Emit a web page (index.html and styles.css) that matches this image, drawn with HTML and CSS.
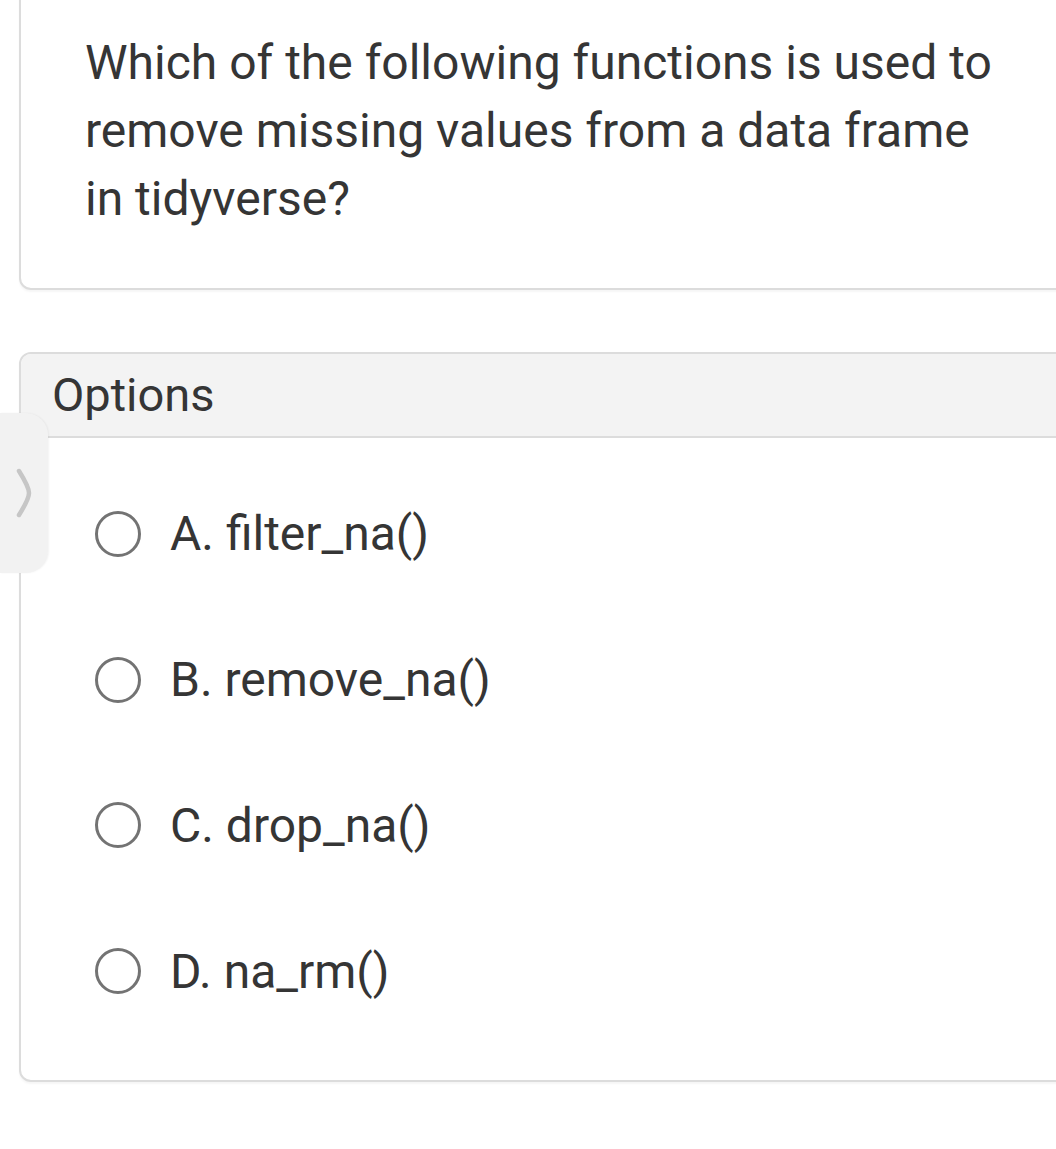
FILE: index.html
```html
<!DOCTYPE html>
<html>
<head>
<meta charset="utf-8">
<link rel="stylesheet" href="styles.css">
</head>
<body>
<div class="page">
  <div class="card question">
    <p class="qtext">Which of the following functions is used to remove missing values from a data frame in tidyverse?</p>
  </div>
  <div class="card options">
    <div class="opt-header">Options</div>
    <div class="opt-list">
      <label class="opt"><span class="radio"></span><span class="opt-text">A. filter_na()</span></label>
      <label class="opt"><span class="radio"></span><span class="opt-text">B. remove_na()</span></label>
      <label class="opt"><span class="radio"></span><span class="opt-text">C. drop_na()</span></label>
      <label class="opt"><span class="radio"></span><span class="opt-text">D. na_rm()</span></label>
    </div>
  </div>
</div>
<div class="side-tab">
  <svg width="24" height="50" viewBox="0 0 24 50"><path d="M7 3 Q 17 19 17 25 Q 17 31 7 47" fill="none" stroke="#c6c6c6" stroke-width="4.5" stroke-linecap="round"/></svg>
</div>
</body>
</html>
```
FILE: styles.css
```css
html, body {
  margin: 0;
  padding: 0;
  background: #ffffff;
  overflow: hidden;
}
body {
  font-family: Roboto, "Liberation Sans", Arial, sans-serif;
  color: #353535;
  width: 1056px;
  height: 1149px;
  position: relative;
}
.page {
  padding-left: 19px;
  width: 1080px;
}
.card {
  border: 2px solid #dcdcdc;
  border-radius: 12px;
  background: #ffffff;
  box-shadow: 0 2px 2px rgba(0,0,0,0.04);
}
.question {
  margin-top: -22px;
  padding: 49px 40px 55px 64px;
}
.qtext {
  margin: 0;
  font-size: 48px;
  line-height: 68px;
  width: 930px;
}
.options {
  margin-top: 62px;
  overflow: hidden;
}
.opt-header {
  background: #f3f3f3;
  border-bottom: 2px solid #dcdcdc;
  height: 82px;
  padding-left: 31px;
  font-size: 47px;
  line-height: 82px;
}
.opt-list {
  padding: 23px 0 36px 0;
  display: flex;
  flex-direction: column;
}
.opt {
  height: 145.8px;
  display: flex;
  align-items: center;
  padding-left: 74px;
}
.radio {
  width: 40px;
  height: 40px;
  border: 3px solid #737373;
  border-radius: 50%;
  box-sizing: content-box;
  flex: none;
}
.opt-text {
  margin-left: 29px;
  font-size: 48px;
}
.side-tab {
  position: absolute;
  left: 0;
  top: 413px;
  width: 48px;
  height: 160px;
  background: #f2f2f2;
  border-radius: 0 22px 22px 0;
  box-shadow: 1px 0 2px rgba(0,0,0,0.05);
  display: flex;
  align-items: center;
  padding-left: 12px;
  box-sizing: border-box;
}
```
